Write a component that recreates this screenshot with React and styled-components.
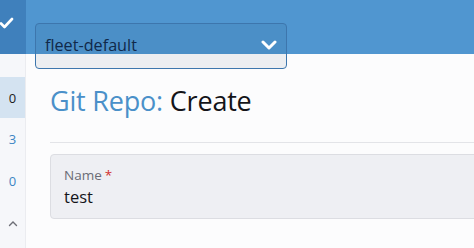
import React from 'react';
import styled, { createGlobalStyle } from 'styled-components';

const Global = createGlobalStyle`
  html, body { margin: 0; padding: 0; }
  body {
    font-family: "Open Sans", "Noto Sans", "Liberation Sans", sans-serif;
    background: #fcfcfd;
    overflow: hidden;
  }
`;

const Page = styled.div`
  position: relative;
  width: 474px;
  height: 248px;
  overflow: hidden;
  display: flex;
  flex-direction: column;
`;

const Header = styled.header`
  height: 54px;
  flex: none;
  display: flex;
  background: #5096d0;
`;

const MenuToggle = styled.div`
  width: 26px;
  background: #3f80bc;
  display: flex;
  align-items: center;
  justify-content: flex-start;
  padding-bottom: 8px;
  box-sizing: border-box;
`;

const Body = styled.div`
  flex: 1;
  display: flex;
  min-height: 0;
`;

const Side = styled.nav`
  width: 25px;
  flex: none;
  background: #f6f7fa;
  border-right: 1px solid #ebecf0;
  padding-top: 23px;
  display: flex;
  flex-direction: column;
`;

const SideItem = styled.div`
  height: ${p => (p.$active ? '41px' : '42px')};
  display: flex;
  align-items: center;
  justify-content: center;
  font-size: 13px;
  color: ${p => (p.$active ? '#1b1c21' : '#3d86c4')};
  background: ${p => (p.$active ? '#d4e3f1' : 'transparent')};
`;

const Content = styled.main`
  flex: none;
  width: 600px;
  padding: 29px 0 0 24px;
  box-sizing: border-box;
`;

const Title = styled.h1`
  margin: 0;
  font-size: 27px;
  font-weight: 400;
  line-height: 36px;
  letter-spacing: -0.2px;
  color: #141419;
  span { color: #4a90c9; }
`;

const Divider = styled.hr`
  margin: 23px 0 0;
  border: 0;
  border-top: 1.5px solid #e3e4e8;
`;

const Field = styled.div`
  margin-top: 11px;
  height: 65px;
  box-sizing: border-box;
  background: #eeeff3;
  border: 1px solid #dcdde2;
  border-radius: 4px;
  padding: 11px 13px 0;
`;

const Label = styled.div`
  font-size: 13.5px;
  color: #6b6c75;
  line-height: 19px;
  span { color: #d22f2f; margin-left: 3px; }
`;

const Value = styled.div`
  font-size: 16.5px;
  color: #141419;
  line-height: 24px;
  margin-top: 0;
`;

const Select = styled.div`
  position: absolute;
  left: 35px;
  top: 23px;
  width: 252px;
  height: 46px;
  box-sizing: border-box;
  border: 1px solid #3d76ad;
  border-radius: 4px;
  background: rgba(18, 40, 80, 0.065);
  display: flex;
  align-items: center;
  justify-content: space-between;
  padding: 0 9px 2px 9px;
  font-size: 16.2px;
  color: #10294a;
`;

const Chevron = () => (
  <svg width="16" height="10" viewBox="0 0 16 10">
    <path d="M2 2 L8 8 L14 2" fill="none" stroke="#fff" strokeWidth="3" strokeLinecap="round" strokeLinejoin="round" />
  </svg>
);

const Check = () => (
  <svg width="14" height="12" viewBox="0 0 14 12">
    <path d="M1 6.5 L4.5 10 L12 2" fill="none" stroke="#fff" strokeWidth="2.6" strokeLinecap="round" strokeLinejoin="round" />
  </svg>
);

const Up = () => (
  <svg width="10" height="7" viewBox="0 0 10 7">
    <path d="M1.5 5.5 L5 2 L8.5 5.5" fill="none" stroke="#6d6e76" strokeWidth="1.4" strokeLinecap="round" />
  </svg>
);

export default function App() {
  return (
    <Page>
      <Global />
      <Header>
        <MenuToggle><Check /></MenuToggle>
      </Header>
      <Body>
        <Side>
          <SideItem $active>0</SideItem>
          <SideItem>3</SideItem>
          <SideItem>0</SideItem>
          <SideItem><Up /></SideItem>
        </Side>
        <Content>
          <Title><span>Git Repo:</span> Create</Title>
          <Divider />
          <Field>
            <Label>Name<span>*</span></Label>
            <Value>test</Value>
          </Field>
        </Content>
      </Body>
      <Select>
        fleet-default
        <Chevron />
      </Select>
    </Page>
  );
}
